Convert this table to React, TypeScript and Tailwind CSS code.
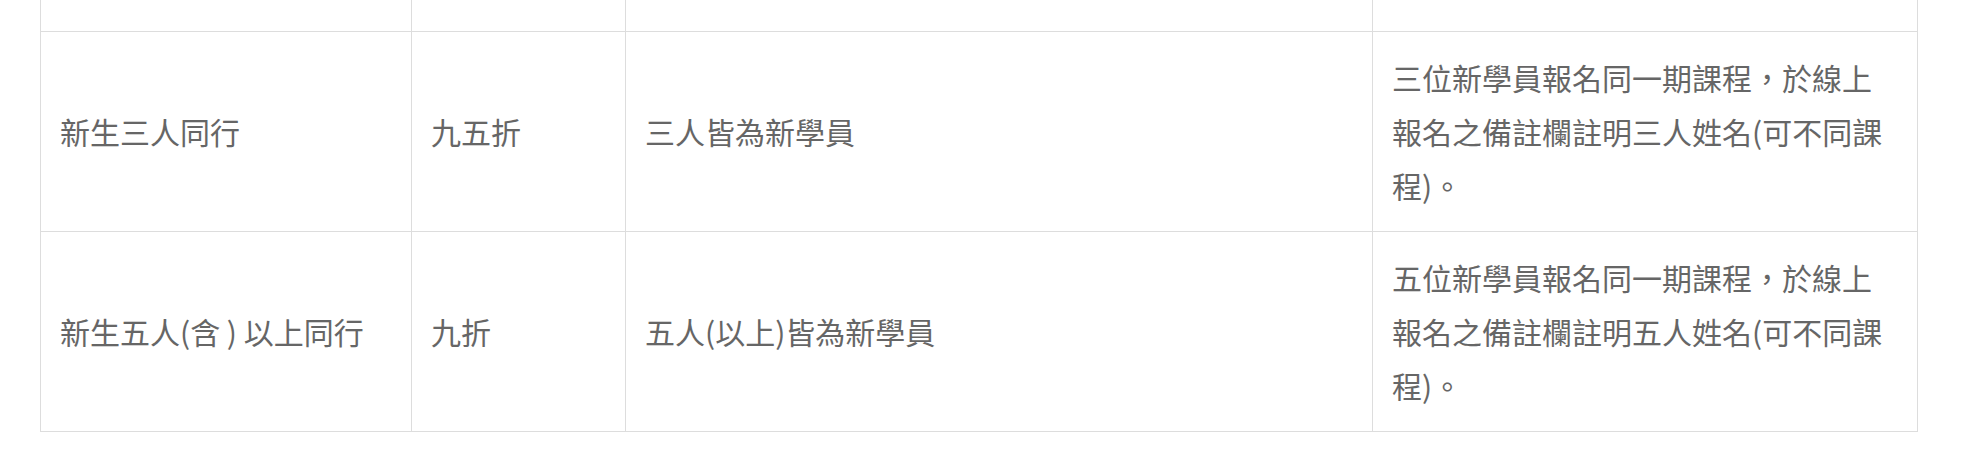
import React from 'react';

type Row = {
    name: string;
    discount: string;
    condition: string;
    note: string;
};

const rows: Row[] = [
    {
        name: '新生三人同行',
        discount: '九五折',
        condition: '三人皆為新學員',
        note: '三位新學員報名同一期課程，於線上報名之備註欄註明三人姓名(可不同課程)。',
    },
    {
        name: '新生五人(含 ) 以上同行',
        discount: '九折',
        condition: '五人(以上)皆為新學員',
        note: '五位新學員報名同一期課程，於線上報名之備註欄註明五人姓名(可不同課程)。',
    },
];

const cell = 'border border-[#dddddd] pl-[19px] pr-5 py-[18px] align-middle';
const edge = 'border border-t-0 border-[#dddddd] p-0';

const App: React.FC = () => {
    return (
        <div
            lang="zh-Hant-TW"
            className="min-h-screen bg-white pl-[40px] font-['Noto_Sans_CJK_TC','Noto_Sans',sans-serif] text-[30px] leading-[54px] text-[#666666]"
        >
            <table className="w-[1878px] table-fixed border-collapse">
                <colgroup>
                    <col className="w-[371px]" />
                    <col className="w-[214px]" />
                    <col className="w-[747px]" />
                    <col />
                </colgroup>
                <tbody>
                    {/* 上一列的底部 */}
                    <tr className="h-[31px]">
                        <td className={edge} />
                        <td className={edge} />
                        <td className={edge} />
                        <td className={edge} />
                    </tr>
                    {rows.map((row) => (
                        <tr key={row.name} className="h-[200px]">
                            <td className={cell}>{row.name}</td>
                            <td className={cell}>{row.discount}</td>
                            <td className={cell}>{row.condition}</td>
                            <td className={cell}>{row.note}</td>
                        </tr>
                    ))}
                </tbody>
            </table>
        </div>
    );
};

export default App;
